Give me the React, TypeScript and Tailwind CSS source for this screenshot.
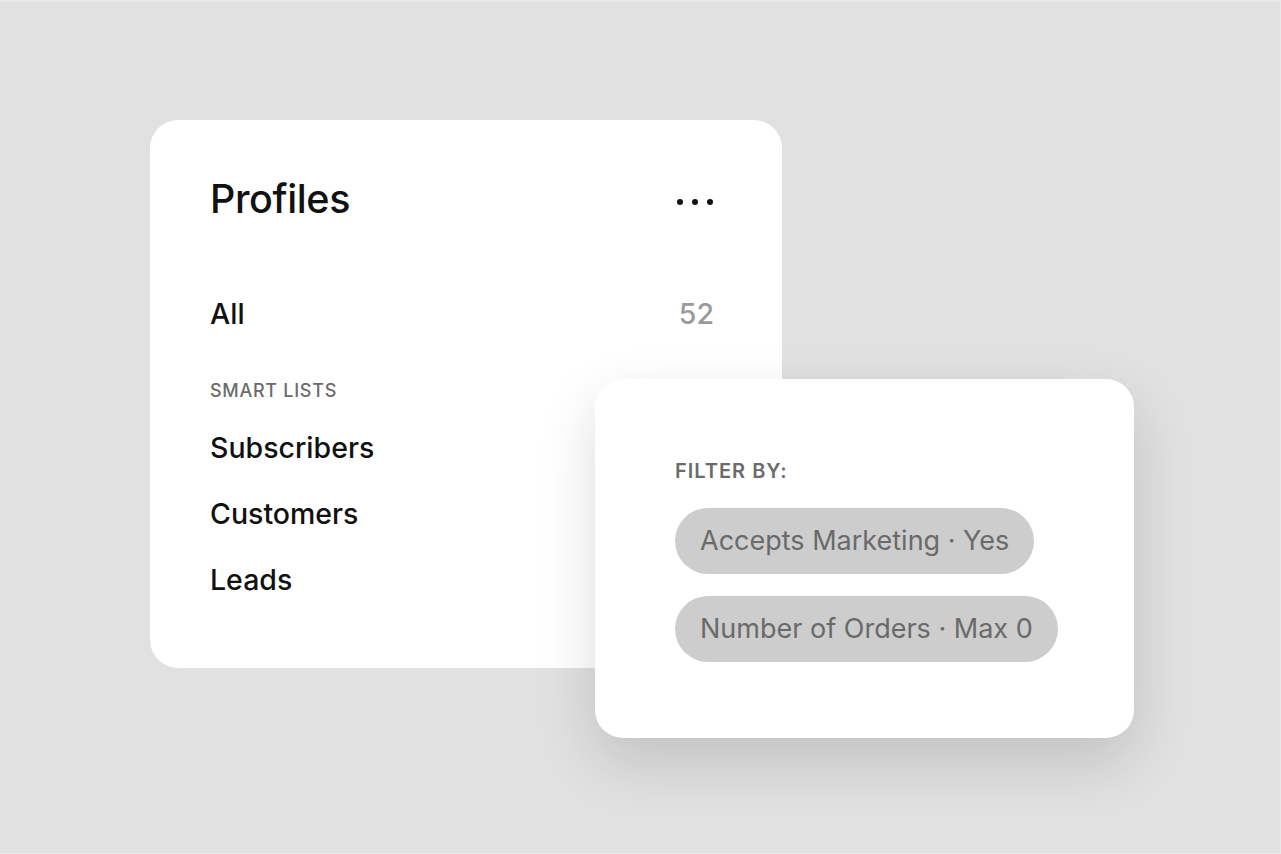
import React from 'react';

const lists = ['Subscribers', 'Customers', 'Leads'];
const filters = ['Accepts Marketing · Yes', 'Number of Orders · Max 0'];

function Dots() {
    return (
        <svg width="38" height="8" viewBox="0 0 38 8" className="block mt-[6px]">
            <circle cx="4" cy="4" r="3" fill="#111111" />
            <circle cx="19" cy="4" r="3" fill="#111111" />
            <circle cx="34" cy="4" r="3" fill="#111111" />
        </svg>
    );
}

export default function App() {
    return (
        <div
            className="relative w-[1281px] h-[854px] overflow-hidden bg-[#e1e1e1] border-t-2 border-r border-b border-[#e9e9e9] pt-[118px] pl-[150px]"
            style={{ fontFamily: 'Inter, "Noto Sans", sans-serif' }}
        >
            {/* Profiles card */}
            <div className="w-[632px] h-[548px] bg-white rounded-[28px] pt-[55px] pl-[60px] pr-[68px]">
                <div className="flex items-center justify-between">
                    <h1 className="text-[39.5px] leading-[48px] font-[550] text-[#111111] tracking-[-0.01em]">Profiles</h1>
                    <Dots />
                </div>

                <div className="mt-[73px] flex items-center justify-between text-[28.5px] leading-[36px] font-[550]">
                    <span className="text-[#111111]">All</span>
                    <span className="text-[#9a9a9a]">52</span>
                </div>

                <p className="mt-[48px] text-[18px] leading-[22px] font-medium tracking-[0.04em] text-[#6b6b6b] uppercase">Smart Lists</p>

                <ul className="mt-[28px] flex flex-col gap-[30px]">
                    {lists.map((name) => (
                        <li key={name} className="text-[28.5px] leading-[36px] font-[550] text-[#111111]">{name}</li>
                    ))}
                </ul>
            </div>

            {/* Filter card (overlaps the profiles card) */}
            <div className="absolute left-[595px] top-[377px] w-[539px] h-[359px] bg-white rounded-[28px] shadow-[0_24px_60px_rgba(0,0,0,0.14)] pt-[80px] pl-[80px]">
                <p className="text-[20px] leading-[24px] font-semibold tracking-[0.05em] text-[#6b6b6b] uppercase">Filter by:</p>
                <div className="mt-[25px] flex flex-col items-start gap-[22px]">
                    {filters.map((f) => (
                        <span key={f} className="h-[66px] flex items-center px-[25px] rounded-full bg-[#cdcdcd] text-[27px] text-[#6a6a6a]">{f}</span>
                    ))}
                </div>
            </div>
        </div>
    );
}
